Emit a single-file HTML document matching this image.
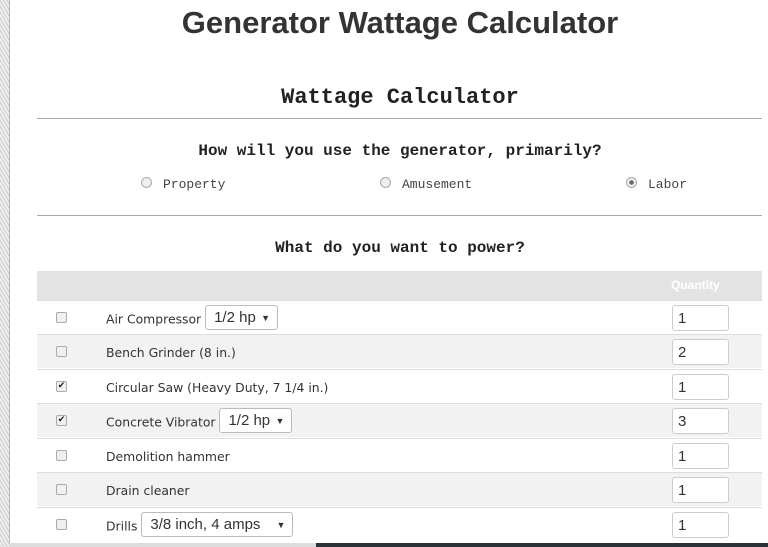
<!DOCTYPE html>
<html><head><style>
body{margin:0;width:768px;height:547px;overflow:hidden;background:#fff;position:relative;font-family:"Liberation Sans",sans-serif;color:#333}
.strip{position:absolute;left:0;top:0;width:9px;height:547px;background:repeating-linear-gradient(60deg,#ccc 0 1px,#eee 1px 3px);border-right:1px solid #bbb}
.a{position:absolute}
.mono{font-family:"Liberation Mono","DejaVu Sans Mono",monospace;font-weight:bold;color:#222}
.hr{position:absolute;left:37px;width:725px;height:1px;background:#aaa}
.radio{position:absolute;width:11px;height:11px;border-radius:50%;border:1px solid #aaa;background:#eee;box-sizing:border-box}
.lbl{position:absolute;font-family:"Liberation Mono",monospace;font-size:13px;color:#444}
.row{position:absolute;left:37px;width:725px;height:34px;border-top:1px solid #ddd;box-sizing:border-box;font-family:"DejaVu Sans",sans-serif;font-size:12.4px;color:#333}
.cb{position:absolute;left:19px;top:11px;width:11px;height:11px;border:1px solid #aaa;border-radius:2px;background:#f0f0f0;box-sizing:border-box;font-size:9px;line-height:9px;text-align:center;color:#222}
.name{position:absolute;left:69px;top:10px;white-space:nowrap}
.name.s{top:9px}
.sel{display:inline-block;border:1px solid #bbb;border-radius:3px;height:25px;line-height:24px;padding:0 8px;box-sizing:border-box;font-family:"Liberation Sans",sans-serif;font-size:15px;vertical-align:middle;margin-top:-5px;margin-left:0;background:#fff;position:relative}
.sel span{position:absolute;right:7px;font-size:9px}
.q{position:absolute;left:635px;top:4px;width:57px;height:26px;border:1px solid #ccc;border-radius:3px;box-sizing:border-box;background:#fff;font-family:"Liberation Sans",sans-serif;font-size:15px;padding-left:5px;line-height:25px}
</style></head><body>
<div class="strip"></div>
<div class="a" style="left:0;width:800px;top:5px;text-align:center;font-size:31px;font-weight:bold;color:#333">Generator Wattage Calculator</div>
<div class="a mono" style="left:0;width:800px;top:85px;text-align:center;font-size:22px">Wattage Calculator</div>
<div class="hr" style="top:118px"></div>
<div class="a mono" style="left:0;width:800px;top:142px;text-align:center;font-size:16px">How will you use the generator, primarily?</div>
<div class="radio" style="left:141px;top:177px"></div><div class="lbl" style="left:163px;top:177px">Property</div>
<div class="radio" style="left:380px;top:177px"></div><div class="lbl" style="left:402px;top:177px">Amusement</div>
<div class="radio" style="left:626px;top:177px;background:radial-gradient(#666 0 2px,#eee 2.5px)"></div><div class="lbl" style="left:648px;top:177px">Labor</div>
<div class="hr" style="top:215px"></div>
<div class="a mono" style="left:0;width:800px;top:239px;text-align:center;font-size:16px">What do you want to power?</div>
<div class="a" style="left:37px;top:271px;width:725px;height:29px;background:#e3e3e3"></div>
<div class="a" style="left:671px;top:278px;font-size:12px;font-weight:bold;color:#fff">Quantity</div>
<div class="row" style="top:300px;background:#fff"><div class="cb"></div><div class="name s">Air Compressor <div class="sel" style="width:73px">1/2 hp<span>▼</span></div></div><div class="q">1</div></div>
<div class="row" style="top:334px;background:#f2f2f2"><div class="cb"></div><div class="name">Bench Grinder (8 in.)</div><div class="q">2</div></div>
<div class="row" style="top:369px;background:#fff"><div class="cb">✔</div><div class="name">Circular Saw (Heavy Duty, 7 1/4 in.)</div><div class="q">1</div></div>
<div class="row" style="top:403px;background:#f2f2f2"><div class="cb">✔</div><div class="name s">Concrete Vibrator <div class="sel" style="width:73px">1/2 hp<span>▼</span></div></div><div class="q">3</div></div>
<div class="row" style="top:438px;background:#fff"><div class="cb"></div><div class="name">Demolition hammer</div><div class="q">1</div></div>
<div class="row" style="top:472px;background:#f2f2f2"><div class="cb"></div><div class="name">Drain cleaner</div><div class="q">1</div></div>
<div class="row" style="top:507px;background:#fff"><div class="cb"></div><div class="name s">Drills <div class="sel" style="width:152px">3/8 inch, 4 amps<span>▼</span></div></div><div class="q">1</div></div>
<div class="a" style="left:9px;top:543px;width:307px;height:4px;background:#ddd"></div>
<div class="a" style="left:316px;top:543px;width:452px;height:4px;background:#2b3338"></div>
</body></html>
